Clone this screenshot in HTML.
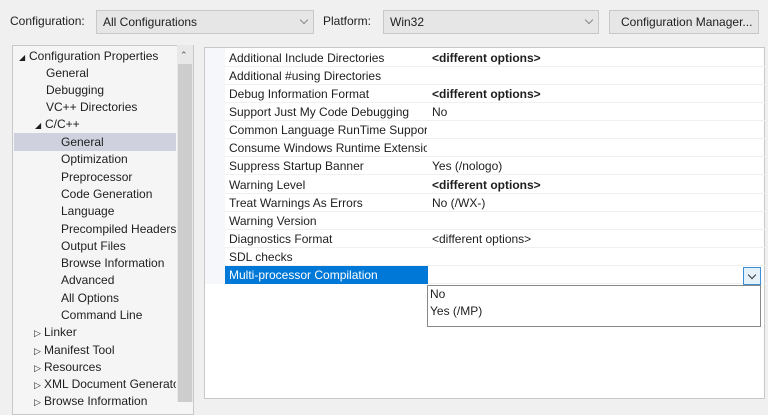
<!DOCTYPE html>
<html><head><style>
*{margin:0;padding:0;box-sizing:border-box}
body{width:768px;height:402px;background:#f0f0f0;font-family:"Segoe UI","Liberation Sans",sans-serif;font-size:12px;color:#1e1e1e;position:relative;overflow:hidden}
.a{position:absolute;white-space:nowrap}
.combo{position:absolute;height:24px;background:#e6e6e6;border:1px solid #c8c8c8;padding:4px 0 0 6px;white-space:nowrap}
.chev{position:absolute;right:6px;top:6px;width:6px;height:6px;border-right:1px solid #888;border-bottom:1px solid #888;transform:rotate(45deg)}
.tree{position:absolute;left:12px;top:45px;width:182px;height:370px;background:#f5f5f5;border:1px solid #c8c8c8}
.sb{position:absolute;left:177px;top:45px;width:16px;height:357px;background:#e8e8e8}
.thumb{position:absolute;left:178px;top:64px;width:14px;height:338px;background:#cdcdcd}
.t{position:absolute;white-space:nowrap;height:17px;line-height:17px}
.grid{position:absolute;left:204px;top:47px;width:561px;height:352px;background:#fff;border:1px solid #c8c8c8}
.r{position:absolute;left:20px;width:540px;height:18px;line-height:18px;border-bottom:1px solid #f0f0f0;white-space:nowrap}
.r .n{position:absolute;left:4px;width:198px;overflow:hidden;white-space:nowrap}
.r .v{position:absolute;left:207px;white-space:nowrap}
.tri{font-size:8px;display:inline-block;width:10px}
</style></head><body>
<div class="a" style="left:10px;top:14px">Configuration:</div>
<div class="combo" style="left:96px;top:10px;width:218px">All Configurations<div class="chev"></div></div>
<div class="a" style="left:323px;top:14px">Platform:</div>
<div class="combo" style="left:383px;top:10px;width:216px">Win32<div class="chev"></div></div>
<div class="combo" style="left:609px;top:10px;width:150px;padding-left:11px">Configuration Manager...</div>

<div class="tree"></div>
<div class="sb"></div><div class="thumb"></div>
<div class="a" style="left:180px;top:50px;font-size:9px;color:#555">&#8963;</div>
<div class="t" style="left:14px;top:133px;width:162px;height:18px;background:#cfd2de"></div>
<div class="t" style="left:19px;top:48px"><span class="tri">◢</span>Configuration Properties</div>
<div class="t" style="left:46px;top:65px">General</div>
<div class="t" style="left:46px;top:82px">Debugging</div>
<div class="t" style="left:46px;top:99px">VC++ Directories</div>
<div class="t" style="left:35px;top:116px"><span class="tri">◢</span>C/C++</div>
<div class="t" style="left:61px;top:134px">General</div>
<div class="t" style="left:61px;top:151px">Optimization</div>
<div class="t" style="left:61px;top:169px">Preprocessor</div>
<div class="t" style="left:61px;top:186px">Code Generation</div>
<div class="t" style="left:61px;top:203px">Language</div>
<div class="t" style="left:61px;top:221px">Precompiled Headers</div>
<div class="t" style="left:61px;top:238px">Output Files</div>
<div class="t" style="left:61px;top:255px">Browse Information</div>
<div class="t" style="left:61px;top:272px">Advanced</div>
<div class="t" style="left:61px;top:290px">All Options</div>
<div class="t" style="left:61px;top:307px">Command Line</div>
<div class="t" style="left:34px;top:324px"><span class="tri" style="font-size:9px">▷</span>Linker</div>
<div class="t" style="left:34px;top:342px"><span class="tri" style="font-size:9px">▷</span>Manifest Tool</div>
<div class="t" style="left:34px;top:359px"><span class="tri" style="font-size:9px">▷</span>Resources</div>
<div class="t" style="left:34px;top:376px;width:142px;overflow:hidden"><span class="tri" style="font-size:9px">▷</span>XML Document Generator</div>
<div class="t" style="left:34px;top:393px"><span class="tri" style="font-size:9px">▷</span>Browse Information</div>

<div class="grid">
<div style="position:absolute;left:0;top:0;width:20px;height:236px;background:#f5f7fa"></div>
<div class="r" style="top:1px"><span class="n">Additional Include Directories</span><span class="v"><b>&lt;different options&gt;</b></span></div>
<div class="r" style="top:19px"><span class="n">Additional #using Directories</span></div>
<div class="r" style="top:37px"><span class="n">Debug Information Format</span><span class="v"><b>&lt;different options&gt;</b></span></div>
<div class="r" style="top:55px"><span class="n">Support Just My Code Debugging</span><span class="v">No</span></div>
<div class="r" style="top:73px"><span class="n">Common Language RunTime Support</span></div>
<div class="r" style="top:91px"><span class="n">Consume Windows Runtime Extension</span></div>
<div class="r" style="top:109px"><span class="n">Suppress Startup Banner</span><span class="v">Yes (/nologo)</span></div>
<div class="r" style="top:128px"><span class="n">Warning Level</span><span class="v"><b>&lt;different options&gt;</b></span></div>
<div class="r" style="top:146px"><span class="n">Treat Warnings As Errors</span><span class="v">No (/WX-)</span></div>
<div class="r" style="top:164px"><span class="n">Warning Version</span></div>
<div class="r" style="top:182px"><span class="n">Diagnostics Format</span><span class="v">&lt;different options&gt;</span></div>
<div class="r" style="top:200px"><span class="n">SDL checks</span></div>
<div class="r" style="top:218px"><span style="position:absolute;left:0;top:0;width:203px;height:18px;background:#0078d7;color:#fff;padding-left:4px">Multi-processor Compilation</span></div>
<div style="position:absolute;left:538px;top:219px;width:18px;height:18px;border:1px solid #3c8fd6;background:#e5f1fb"><div class="chev" style="right:5px;top:4px;border-color:#333"></div></div>
<div style="position:absolute;left:222px;top:237px;width:334px;height:42px;border:1px solid #888;background:#fff">
<div class="a" style="left:2px;top:1px">No</div>
<div class="a" style="left:2px;top:18px">Yes (/MP)</div>
</div>
</div>
</body></html>
